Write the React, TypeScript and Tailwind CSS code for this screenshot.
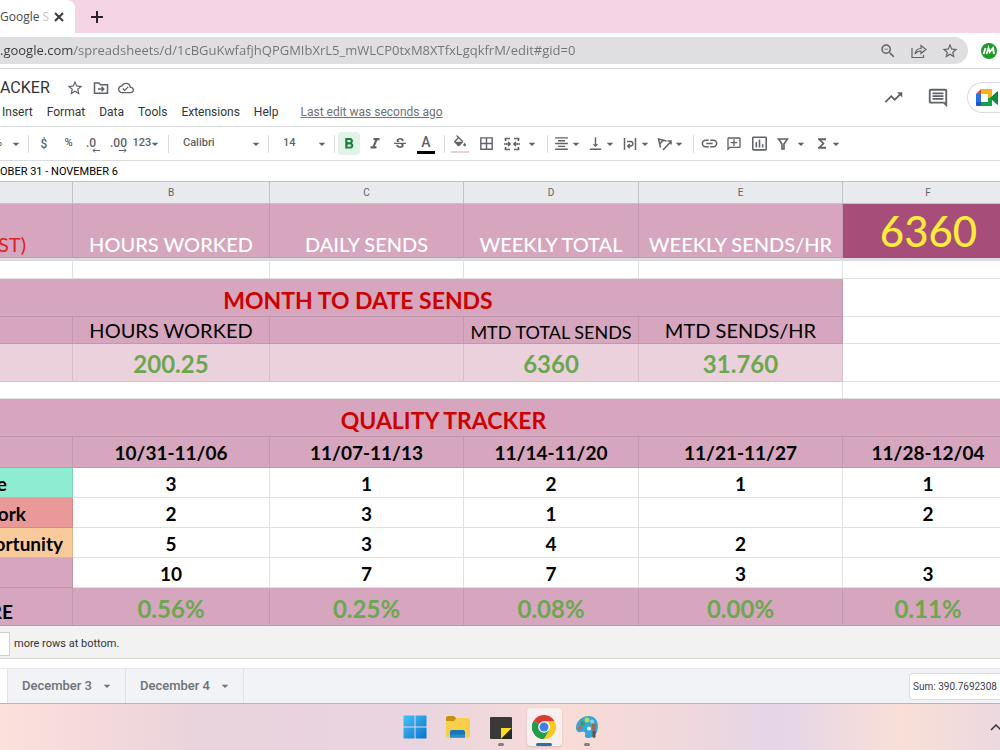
import React, { useState } from "react";
import {
  MdArrowDropDown,
  MdBorderAll,
  MdFormatAlignCenter,
  MdFormatBold,
  MdFormatItalic,
  MdFunctions,
  MdInsertChartOutlined,
  MdLink,
  MdOutlineAddComment,
  MdOutlineCloudDone,
  MdOutlineInsertComment,
  MdStarBorder,
  MdStrikethroughS,
  MdTrendingUp,
  MdVerticalAlignBottom,
  MdZoomOut,
} from "react-icons/md";

const menus = ["Insert", "Format", "Data", "Tools", "Extensions", "Help"];
const sheets = ["December 3", "December 4"];

const counts = [
  { label: "e", pad: "pr-[65px]", color: "bg-[#8eecd3]", values: ["3", "1", "2", "1", "1"] },
  { label: "ork", pad: "pr-[46px]", color: "bg-[#ea9999]", values: ["2", "3", "1", "", "2"] },
  { label: "ortunity", pad: "pr-[9px]", color: "bg-[#f9cb9c]", values: ["5", "3", "4", "2", ""] },
  { label: "", pad: "", color: "bg-[#d5a6bd]", values: ["10", "7", "7", "3", "3"] },
];

const pink = "bg-[#d5a6bd] border-r border-b border-[#c398ae]";
const light = "bg-[#ead1dc] border-r border-b border-[#d9bfcb] text-[24px] font-bold text-[#6aa84f]";
const plain = "border-r border-b border-[#e1e1e1]";

const Separator = () => <span className="mr-[3px] ml-1 h-[18px] w-px shrink-0 bg-[#dadce0]" />;

const Caret = () => <MdArrowDropDown className="size-4 shrink-0" />;

type ToolProps = { label: string; width: string; children: React.ReactNode };

const Tool = ({ label, width, children }: ToolProps) => (
  <button aria-label={label} className={`flex h-6 shrink-0 items-center justify-center ${width}`}>
    {children}
  </button>
);

const BrowserBar = () => {
  const [url, setUrl] = useState(
    ".google.com/spreadsheets/d/1cBGuKwfafjhQPGMIbXrL5_mWLCP0txM8XTfxLgqkfrM/edit#gid=0"
  );

  return (
    <div className="bg-[#f5d5e5]">
      <div className="flex h-[33px] items-end">
        <div className="flex h-full w-[75px] items-center rounded-tr-lg bg-white font-['Open_Sans',sans-serif] text-[12px] text-[#4a4a4e]">
          <span className="w-[52px] whitespace-nowrap">
            Google <span className="text-[#c8c8ca]">S</span>
          </span>
          <button aria-label="Close tab">
            <svg viewBox="0 0 14 14" className="size-[14px]" stroke="#3c3c40" strokeWidth="2">
              <path d="M3 3l8 8M11 3l-8 8" />
            </svg>
          </button>
        </div>
        <button aria-label="New tab" className="flex h-full w-11 items-center justify-center">
          <svg viewBox="0 0 14 14" className="size-[14px]" stroke="#29232a" strokeWidth="2">
            <path d="M7 1v12M1 7h12" />
          </svg>
        </button>
      </div>
      <div className="flex h-9 items-center border-b border-[#d3d5d8] bg-white">
        <div className="flex h-[27px] flex-1 items-center gap-[11px] rounded-r-full bg-[#dfdfe2] pr-[9px] text-[#5f6368]">
          <input
            aria-label="Address"
            value={url}
            onChange={(e) => setUrl(e.target.value)}
            className="min-w-0 flex-1 bg-[linear-gradient(90deg,#35363a_73px,#717276_73px)] bg-clip-text pt-px font-['Open_Sans',sans-serif] text-[13px] text-transparent caret-black outline-none"
          />
          <button aria-label="Zoom">
            <MdZoomOut className="size-[18px]" />
          </button>
          <button aria-label="Share page" className="mx-[3px]">
            <svg viewBox="0 0 16 16" className="size-4" fill="none" stroke="currentColor" strokeWidth="1.2">
              <path d="M1 5v9.5h11.5V12" />
              <path d="M4 11c.5-3.500 2.500-5.500 6-5.500V2.500l5 4-5 4V8c-2.500 0-4.500.8-6 3z" />
            </svg>
          </button>
          <button aria-label="Bookmark">
            <MdStarBorder className="size-[18px]" />
          </button>
        </div>
        <button aria-label="Extension" className="mr-[3px] ml-[13px]">
          <svg viewBox="0 0 16 16" className="size-4" fill="none">
            <circle cx="8" cy="8" r="8" fill="#1d9a25" />
            <path d="M2.500 11l2-6M5.500 11l2-6 1.300 4L12 5l1 6" stroke="#fff" strokeWidth="1.900" />
          </svg>
        </button>
      </div>
    </div>
  );
};

const DocumentHeader = () => (
  <header className="flex h-[58px] items-center justify-between overflow-hidden border-b border-[#dadce0]">
    <div className="pt-1">
      <div className="flex h-6 items-center gap-2 text-[#5f6368]">
        <input
          aria-label="Document name"
          defaultValue="ACKER"
          className="w-[58px] text-[16px] text-[#333] outline-none"
        />
        <button aria-label="Star">
          <MdStarBorder className="size-[18px]" />
        </button>
        <button aria-label="Move">
          <svg viewBox="0 0 18 18" className="size-[18px]" fill="none" stroke="currentColor" strokeWidth="1.500">
            <path d="M2.500 4h4.500l1.500 1.700h7v8.500h-13z" />
            <path d="M6 10h5.500M9.500 7.700L11.800 10l-2.300 2.300" />
          </svg>
        </button>
        <button aria-label="Document status">
          <MdOutlineCloudDone className="size-4" />
        </button>
      </div>
      <nav className="flex h-6 items-center gap-[14px] pl-0.5 text-[12px] text-[#333639]">
        {menus.map((menu) => (
          <button key={menu}>{menu}</button>
        ))}
        <a href="#history" className="ml-2 text-[#6f7276] underline">
          Last edit was seconds ago
        </a>
      </nav>
    </div>
    <div className="flex items-center gap-[23px] text-[#5f6368]">
      <button aria-label="Activity">
        <MdTrendingUp className="size-[21px]" />
      </button>
      <button aria-label="Comments">
        <MdOutlineInsertComment className="size-[22px]" />
      </button>
      <button
        aria-label="Meet"
        className="-ml-[5px] flex h-[31px] w-[33px] items-center rounded-l-full border border-r-0 border-[#dadce0] pl-2"
      >
        <svg viewBox="0 0 22 18" className="h-[18px] w-[22px] shrink-0">
          <path d="M0 5h5v8H0z" fill="#2a6fe8" />
          <path d="M5 0v5H0z" fill="#e2402c" />
          <path d="M5 0h11v9h-4V5H5z" fill="#f5b51a" />
          <path d="M5 13h7V9h4v8H5z" fill="#15a04b" />
          <path d="M0 13h5v4H1q-1 0-1-1z" fill="#1b57c4" />
          <path d="M14 9l7-6.500q1-.6 1 .5v12q0 1.100-1 .5z" fill="#0c8a3b" />
        </svg>
      </button>
    </div>
  </header>
);

const Toolbar = () => (
  <div className="flex h-[34px] items-center overflow-hidden border-b border-[#dadce0] text-[11px] font-medium text-[#5f6368]">
    <button aria-label="Zoom" className="flex w-6 shrink-0 items-center justify-between">
      <span className="flex w-0.5 justify-end">%</span>
      <Caret />
    </button>
    <Separator />
    <Tool label="Currency" width="w-6">
      <span className="text-[12px]">$</span>
    </Tool>
    <Tool label="Percent" width="w-[25px]">%</Tool>
    <Tool label="Fewer decimals" width="w-6">
      <span className="flex flex-col items-end pt-1 text-[12px] leading-[11px]">
        <span className="pr-1">.0</span>
        <svg viewBox="0 0 8 5" className="-mt-px h-[5px] w-2" stroke="currentColor" fill="none">
          <path d="M8 2.500H1M3 .5l-2 2 2 2" />
        </svg>
      </span>
    </Tool>
    <Tool label="More decimals" width="w-[27px]">
      <span className="flex flex-col items-end pt-1 text-[12px] leading-[11px]">
        .00
        <svg viewBox="0 0 8 5" className="-mt-px h-[5px] w-2" stroke="currentColor" fill="none">
          <path d="M0 2.500h7M5 .5l2 2-2 2" />
        </svg>
      </span>
    </Tool>
    <Tool label="Number format" width="w-8">
      <span className="-mr-1">123</span>
      <Caret />
    </Tool>
    <Separator />
    <label className="flex shrink-0 items-center pl-[11px]">
      <select aria-label="Font" className="w-[65px] appearance-none outline-none">
        <option>Calibri</option>
      </select>
      <Caret />
    </label>
    <Separator />
    <label className="flex shrink-0 items-center pl-[11px]">
      <select aria-label="Font size" className="w-[31px] appearance-none outline-none">
        <option>14</option>
      </select>
      <Caret />
    </label>
    <Separator />
    <button
      aria-label="Bold"
      className="mr-0.5 flex h-[23px] w-[22px] shrink-0 items-center justify-center rounded-sm bg-[#e2f3e8] text-[#188038]"
    >
      <MdFormatBold className="size-[18px]" />
    </button>
    <Tool label="Italic" width="w-[26px]">
      <MdFormatItalic className="size-[18px]" />
    </Tool>
    <Tool label="Strikethrough" width="w-6">
      <MdStrikethroughS className="size-4" />
    </Tool>
    <Tool label="Text color" width="w-7">
      <span className="w-[18px] border-b-[3px] border-black text-center text-[14px] leading-[17px]">A</span>
    </Tool>
    <Separator />
    <Tool label="Fill color" width="w-6">
      <span className="flex w-[18px] justify-center border-b-2 border-[#ead1dc] pb-1">
        <svg viewBox="0 0 24 18" className="h-3 w-4" fill="currentColor">
          <path d="M16.560 8.940L7.620 0 6.210 1.410l2.380 2.380-5.150 5.150a1.490 1.490 0 000 2.120l5.500 5.500c.29.29.68.44 1.060.44s.77-.15 1.060-.44l5.500-5.500c.59-.58.59-1.530 0-2.120zM5.210 10L10 5.210 14.790 10zM19 11.500s-2 2.170-2 3.500c0 1.100.9 2 2 2s2-.9 2-2c0-1.330-2-3.500-2-3.500z" />
        </svg>
      </span>
    </Tool>
    <Tool label="Borders" width="w-[29px]">
      <MdBorderAll className="size-[17px]" />
    </Tool>
    <Tool label="Merge cells" width="w-[42px]">
      <svg viewBox="0 0 16 14" className="mr-1 h-[14px] w-4" fill="none" stroke="currentColor" strokeWidth="1.700">
        <path d="M6 1.500H1.500V4M10 1.500h4.500V4M6 12.500H1.500V10M10 12.500h4.500V10" />
        <path d="M0 7h5.500M16 7h-5.500M4 4.800L6.200 7 4 9.200M12 4.800L9.800 7l2.200 2.200" strokeWidth="1.300" />
      </svg>
      <Caret />
    </Tool>
    <Separator />
    <Tool label="Horizontal align" width="w-[34px]">
      <MdFormatAlignCenter className="-mr-0.5 size-[17px]" />
      <Caret />
    </Tool>
    <Tool label="Vertical align" width="w-[35px]">
      <MdVerticalAlignBottom className="-mr-0.5 size-[17px]" />
      <Caret />
    </Tool>
    <Tool label="Text wrapping" width="w-[35px]">
      <svg viewBox="0 0 14 14" className="size-[14px] shrink-0" fill="none" stroke="currentColor" strokeWidth="1.500">
        <path d="M1.500 1v12M12.500 1v12M4 4.500h3.500a2.300 2.300 0 010 4.600H5M6.800 7L4.700 9.100l2.100 2.100" />
      </svg>
      <Caret />
    </Tool>
    <Tool label="Text rotation" width="w-[34px]">
      <svg viewBox="0 0 16 14" className="-mr-0.5 h-[14px] w-4 shrink-0" fill="none" stroke="currentColor" strokeWidth="1.500">
        <path d="M3.500 10.500L1.500 2l8 2M2.700 7L6.500 3M6 13l8-8.500M10.500 4H14v3.500" />
      </svg>
      <Caret />
    </Tool>
    <Separator />
    <Tool label="Insert link" width="w-6">
      <MdLink className="size-[19px]" />
    </Tool>
    <Tool label="Insert comment" width="w-[26px]">
      <MdOutlineAddComment className="size-4 -scale-x-100" />
    </Tool>
    <Tool label="Insert chart" width="w-[25px]">
      <MdInsertChartOutlined className="size-[19px]" />
    </Tool>
    <Tool label="Filter" width="w-[42px]">
      <svg viewBox="0 0 12 14" className="mr-1 h-[14px] w-3 shrink-0" fill="none" stroke="currentColor" strokeWidth="1.600">
        <path d="M1.500 2h9L7 7v5H5V7z" />
      </svg>
      <Caret />
    </Tool>
    <Tool label="Functions" width="w-[30px]">
      <MdFunctions className="-mr-0.5 size-[19px]" />
      <Caret />
    </Tool>
  </div>
);

const Sheet = () => (
  <div className="overflow-hidden bg-[#f2f2f2]">
    {/* column A is partly scrolled out of view */}
    <div className="-ml-[126px]">
      <table className="w-full min-w-[1140px] table-fixed border-separate border-spacing-0 bg-white text-center font-[Lato,sans-serif] whitespace-nowrap text-black">
        <colgroup>
          <col className="w-[199px]" />
          <col className="w-[197px]" />
          <col className="w-[194px]" />
          <col className="w-[175px]" />
          <col className="w-[204px]" />
          <col />
        </colgroup>
        <thead>
          <tr className="h-[23px] font-[Roboto,sans-serif] text-[10px] text-[#5f6368]">
            {["", "B", "C", "D", "E", "F"].map((name) => (
              <th key={name} className="border-y border-r border-[#c0c2c6] bg-[#e8eaed] p-0 font-normal">
                {name}
              </th>
            ))}
          </tr>
        </thead>
        <tbody>
          <tr className="h-[54px] align-bottom text-[20px] leading-[26px] font-medium text-white">
            <td className={`${pink} p-0 pr-[46px] text-right font-normal text-[#e02020]`}>ST)</td>
            <td className={`${pink} p-0`}>HOURS WORKED</td>
            <td className={`${pink} p-0`}>DAILY SENDS</td>
            <td className={`${pink} p-0`}>WEEKLY TOTAL</td>
            <td className={`${pink} p-0`}>WEEKLY SENDS/HR</td>
            <td className="bg-[#a64d79] p-0 align-middle text-[42px] leading-[50px] text-[#ffeb3b]">6360</td>
          </tr>
          <tr className="h-[3px]">
            <td colSpan={6} className="bg-[#dcdbe2] p-0"></td>
          </tr>
          <tr className="h-[18px]">
            {[0, 1, 2, 3, 4, 5].map((i) => (
              <td key={i} className={`${plain} p-0`}></td>
            ))}
          </tr>
          <tr className="h-[38px] text-[23px] leading-[30px] font-bold text-[#cc0000]">
            <td colSpan={5} className={`${pink} p-0 pt-1`}>MONTH TO DATE SENDS</td>
            <td className={`${plain} p-0`}></td>
          </tr>
          <tr className="h-[27px] text-[20px] leading-[26px]">
            <td className={`${pink} p-0`}></td>
            <td className={`${pink} p-0`}>HOURS WORKED</td>
            <td className={`${pink} p-0`}></td>
            <td className={`${pink} p-0 align-bottom text-[18px] leading-[22px]`}>MTD TOTAL SENDS</td>
            <td className={`${pink} p-0`}>MTD SENDS/HR</td>
            <td className={`${plain} p-0`}></td>
          </tr>
          <tr className="h-[38px] leading-[30px]">
            <td className={`${light} p-0`}></td>
            <td className={`${light} p-0 pt-0.5`}>200.25</td>
            <td className={`${light} p-0`}></td>
            <td className={`${light} p-0 pt-0.5`}>6360</td>
            <td className={`${light} p-0 pt-0.5`}>31.760</td>
            <td className={`${plain} p-0`}></td>
          </tr>
          <tr className="h-[17px]">
            <td colSpan={5} className={`${plain} p-0`}></td>
            <td className={`${plain} p-0`}></td>
          </tr>
          <tr className="h-[38px] text-[23px] leading-[30px] font-bold text-[#cc0000]">
            <td colSpan={6} className={`${pink} p-0 pt-1`}>QUALITY TRACKER</td>
          </tr>
          <tr className="h-[31px] text-[19px] leading-6 font-bold">
            {["", "10/31-11/06", "11/07-11/13", "11/14-11/20", "11/21-11/27", "11/28-12/04"].map((week) => (
              <td key={week} className={`${pink} p-0 pt-0.5`}>{week}</td>
            ))}
          </tr>
          {counts.map((row) => (
            <tr key={row.color} className="h-[30px] text-[19px] leading-6 font-bold">
              <td className={`border-r border-b border-black/10 p-0 pt-0.5 text-right ${row.pad} ${row.color}`}>
                {row.label}
              </td>
              {row.values.map((value, i) => (
                <td key={i} className={`${plain} p-0 pt-0.5`}>{value}</td>
              ))}
            </tr>
          ))}
          <tr className="h-[38px] text-[24px] leading-[30px] font-bold text-[#6aa84f]">
            <td className={`${pink} p-0 pr-[59px] text-right align-bottom text-[19px] leading-[26px] text-black`}>RE</td>
            {["0.56%", "0.25%", "0.08%", "0.00%", "0.11%"].map((score) => (
              <td key={score} className={`${pink} p-0 pt-1`}>{score}</td>
            ))}
          </tr>
        </tbody>
      </table>
    </div>
    <label className="flex h-[33px] items-center gap-1 border-b border-[#d5d5d5] pt-1 text-[11px] text-[#333]">
      <input aria-label="Rows to add" className="h-6 w-[10px] border border-l-0 border-[#d0d0d0] bg-white" />
      more rows at bottom.
    </label>
  </div>
);

const SheetTabs = () => (
  <div className="flex h-[45px] items-end border-b border-[#b9b4ba] bg-white">
    <div className="flex h-[35px] flex-1 items-center justify-between border-t border-[#e4e6e9] bg-[#f1f3f6]">
      <div className="flex h-full">
        <span className="w-2 border-r border-[#e0e2e5] bg-white" />
        {sheets.map((sheet) => (
          <button
            key={sheet}
            className="flex w-[118px] items-center gap-[7px] border-r border-[#e0e2e5] pl-[14px] text-[13px] font-medium text-[#6f7276]"
          >
            {sheet}
            <Caret />
          </button>
        ))}
      </div>
      <button className="h-[27px] w-[91px] rounded-l border border-r-0 border-[#dadce0] bg-white text-[10px] text-[#3c4043]">
        Sum: 390.7692308
      </button>
    </div>
  </div>
);

const Taskbar = () => (
  <footer className="flex h-[46px] items-center bg-[linear-gradient(90deg,#fbe0dc_0%,#f5dadb_9%,#e9d3dc_20%,#ead3df_30%,#e9d5df_42%,#f8dcd6_56%,#f0d8dc_68%,#e4d5e8_78%,#f9dfd7_90%,#ecd8df_100%)]">
    <div className="w-[42px]" />
    <div className="flex flex-1 items-center justify-center gap-2">
      <button aria-label="Start" className="flex h-[38px] w-[35px] items-center justify-center">
        <svg viewBox="0 0 24 24" className="size-6">
          <defs>
            <linearGradient id="win" x1="0" y1="0" x2="1" y2="1">
              <stop offset="0" stopColor="#48c3f4" />
              <stop offset="1" stopColor="#0873cf" />
            </linearGradient>
          </defs>
          <path fill="url(#win)" d="M1 .5h10.500V11.500H.5V1zM12.500.5H23l.5.5v10.500h-11zM.5 12.500h11v11H1l-.5-.5zM12.500 12.500h11V23l-.5.5H12.500z" />
        </svg>
      </button>
      <button aria-label="File Explorer" className="flex h-[38px] w-[35px] items-center justify-center">
        <svg viewBox="0 0 24 22" className="h-[22px] w-6">
          <path d="M0 2q0-2 2-2h6l2 2-1 4H0z" fill="#c8900f" />
          <path d="M0 5h8l3-3h11q2 0 2 2v16q0 1.500-1.500 1.500h-21Q0 21.500 0 20z" fill="#f8cf4b" />
          <path d="M4 21.500V16q0-2 2-2h11q2 0 2 2v5.500z" fill="#1577b8" />
          <path d="M4 18.500h15v3H4z" fill="#2a8ccb" />
        </svg>
      </button>
      <button aria-label="Sticky Notes" className="flex h-[38px] w-[35px] flex-col items-center justify-end gap-1">
        <svg viewBox="0 0 22 22" className="size-[22px]">
          <rect width="22" height="22" rx="1" fill="#3a393a" />
          <path d="M11 22V11h11z" fill="#f9dd25" />
          <path d="M22 11v11H11z" fill="#292829" />
        </svg>
        <span className="h-[3px] w-[6px] rounded-full bg-[#8b7b82]" />
      </button>
      <button
        aria-label="Chrome"
        className="flex h-[38px] w-[35px] flex-col items-center justify-end gap-1 rounded bg-[#faeff0] shadow-sm"
      >
        <svg viewBox="0 0 24 24" className="size-6">
          <path d="M12 12L1.600 6A12 12 0 0122.400 6z" fill="#dc3d31" />
          <path d="M12 12v12A12 12 0 011.600 6z" fill="#249b4a" />
          <path d="M12 6h10.400A12 12 0 0112 24l5.200-9z" fill="#fbc91c" />
          <path d="M1.600 6L6.800 15 12 17.800 17.200 15 12 24A12 12 0 011.600 6z" fill="#249b4a" />
          <circle cx="12" cy="12" r="5.800" fill="#fff" />
          <circle cx="12" cy="12" r="4.500" fill="#3f80e8" />
        </svg>
        <span className="h-[3px] w-4 rounded-full bg-[#2f6fa8]" />
      </button>
      <button aria-label="Paint" className="flex h-[38px] w-[35px] flex-col items-center justify-end gap-1">
        <svg viewBox="0 0 24 24" className="size-6">
          <path d="M14 1C6 1 1 7 1 13c0 3 2 5 5 4 3-1 5 0 4 3-.5 2 1 3.500 4 3 6-1 9-6 9-12S19 1 14 1z" fill="#35a6d6" />
          <circle cx="12" cy="5" r="2.500" fill="#b6dc58" />
          <circle cx="7.500" cy="8.500" r="2.300" fill="#3d9d5c" />
          <circle cx="5" cy="13" r="2" fill="#d95a4e" />
          <circle cx="17" cy="6.500" r="2" fill="#8bd4f1" />
          <circle cx="14" cy="13.500" r="2" fill="#e8f4fa" />
          <path d="M17 9h4l-.5 7h-3z" fill="#a06a42" />
          <path d="M17.500 16h3v6q-1.500 2-3 0z" fill="#6a5145" />
        </svg>
        <span className="h-[3px] w-[6px] rounded-full bg-[#8b7b82]" />
      </button>
    </div>
    <button aria-label="Show hidden icons" className="flex w-10 justify-end">
      <svg viewBox="0 0 12 8" className="h-2 w-3" fill="none" stroke="#3a3038" strokeWidth="1.500">
        <path d="M3 7l5-5 5 5" />
      </svg>
    </button>
  </footer>
);

const App: React.FC = () => (
  <div className="overflow-hidden bg-white font-[Roboto,sans-serif]">
    <BrowserBar />
    <DocumentHeader />
    <Toolbar />
    <input
      aria-label="Formula"
      defaultValue="OBER 31 - NOVEMBER 6"
      className="block h-5 w-full text-[11px] text-black outline-none"
    />
    <Sheet />
    <SheetTabs />
    <Taskbar />
  </div>
);

export default App;
